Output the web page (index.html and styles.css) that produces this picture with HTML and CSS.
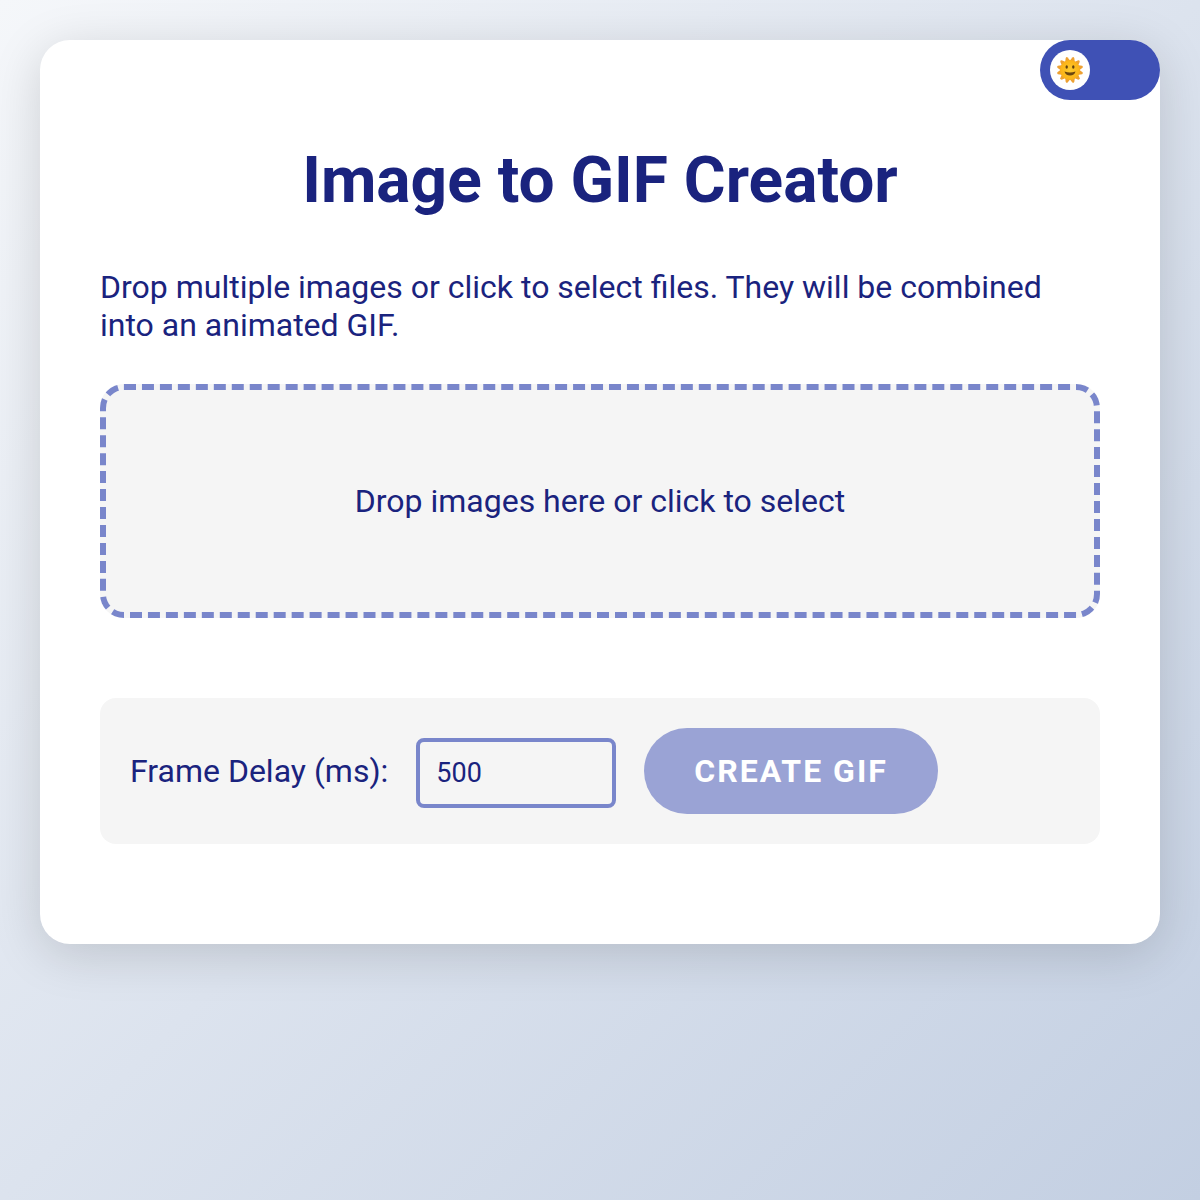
FILE: index.html
```html
<!DOCTYPE html>
<html lang="en">
<head>
<meta charset="utf-8">
<meta name="viewport" content="width=device-width, initial-scale=1">
<title>Image to GIF Creator</title>
<link rel="stylesheet" href="styles.css">
</head>
<body>
<main class="container">
  <label class="theme-toggle">
    <input class="theme-input" type="checkbox" aria-label="Dark theme">
    <span class="theme-knob" aria-hidden="true">
      <svg class="sun" viewBox="-14 -14 28 28">
        <defs>
          <radialGradient id="face"><stop offset="0" stop-color="#fccb2f"/><stop offset="1" stop-color="#fbb116"/></radialGradient>
          <path id="ray" d="M-3-8L-1-12.800Q0-13.800 1-12.800L3-8z"/>
        </defs>
        <g fill="#eda133">
          <use href="#ray" transform="rotate(15)"/>
          <use href="#ray" transform="rotate(45)"/>
          <use href="#ray" transform="rotate(75)"/>
          <use href="#ray" transform="rotate(105)"/>
          <use href="#ray" transform="rotate(135)"/>
          <use href="#ray" transform="rotate(165)"/>
          <use href="#ray" transform="rotate(195)"/>
          <use href="#ray" transform="rotate(225)"/>
          <use href="#ray" transform="rotate(255)"/>
          <use href="#ray" transform="rotate(285)"/>
          <use href="#ray" transform="rotate(315)"/>
          <use href="#ray" transform="rotate(345)"/>
        </g>
        <circle r="10" fill="url(#face)"/>
        <ellipse cx="-3.300" cy="-3" rx="1.200" ry="1.700" fill="#5f3f0e"/>
        <ellipse cx="3.300" cy="-3" rx="1.200" ry="1.700" fill="#5f3f0e"/>
        <path d="M-5.500 1.500Q0 3.500 5.500 1.500Q4.500 5.500 0 5.500T-5.500 1.500z" fill="#6b470f"/>
      </svg>
    </span>
  </label>
  <h1 class="title">Image to GIF Creator</h1>
  <p class="intro">Drop multiple images or click to select files. They will be combined into an animated GIF.</p>
  <button class="drop-zone" type="button">Drop images here or click to select</button>
  <form class="controls">
    <label class="delay-label" for="delay">Frame Delay (ms):</label>
    <input class="delay-input" id="delay" type="number" value="500">
    <button class="create-button" type="button" disabled>Create GIF</button>
  </form>
</main>
</body>
</html>
```
FILE: styles.css
```css
* {
  box-sizing: border-box;
}

body {
  margin: 0;
  min-height: 100vh;
  padding: 40px;
  font-family: Roboto, sans-serif;
  font-size: 32px;
  line-height: 38px;
  color: #1a237e;
  background: linear-gradient(135deg, #f5f7fa 0%, #c3cfe2 100%);
}

.container {
  position: relative;
  max-width: 1600px;
  margin: 0 auto;
  padding: 60px 60px 100px;
  background: #fff;
  border-radius: 30px;
  box-shadow: 0 10px 50px rgba(0, 0, 0, 0.15);
}

.theme-toggle {
  position: absolute;
  top: 0;
  right: 0;
  display: flex;
  width: 120px;
  height: 60px;
  padding: 10px;
  border-radius: 30px;
  background: #3f51b5;
  cursor: pointer;
}

.theme-input {
  position: absolute;
  inset: 0;
  margin: 0;
  opacity: 0;
}

.theme-knob {
  display: flex;
  align-items: center;
  justify-content: center;
  width: 40px;
  height: 40px;
  border-radius: 50%;
  background: #fff;
}

.sun {
  width: 28px;
  height: 28px;
}

.title {
  margin: 43px 0 49px;
  font-size: 64px;
  font-weight: 700;
  line-height: 76px;
  text-align: center;
}

.intro {
  margin: 0 0 40px;
}

.drop-zone {
  display: block;
  width: 100%;
  margin: 0 0 80px;
  padding: 92px 40px;
  border: 6px dashed #7986cb;
  border-radius: 24px;
  background: #f5f5f5;
  color: inherit;
  font: inherit;
  text-align: center;
}

.controls {
  display: flex;
  align-items: baseline;
  flex-wrap: wrap;
  gap: 28px;
  padding: 30px;
  border-radius: 16px;
  background: #f5f5f5;
}

.delay-input {
  width: 200px;
  height: 70px;
  padding: 16px;
  border: 4px solid #7986cb;
  border-radius: 8px;
  background: transparent;
  color: inherit;
  font: inherit;
  font-size: 27px;
}

.create-button {
  padding: 24px 50px;
  border: 0;
  border-radius: 50px;
  background: #3f51b5;
  color: #fff;
  font: inherit;
  font-weight: 700;
  letter-spacing: 2px;
  text-transform: uppercase;
}

.create-button:disabled {
  background: #9aa3d5;
}
```
